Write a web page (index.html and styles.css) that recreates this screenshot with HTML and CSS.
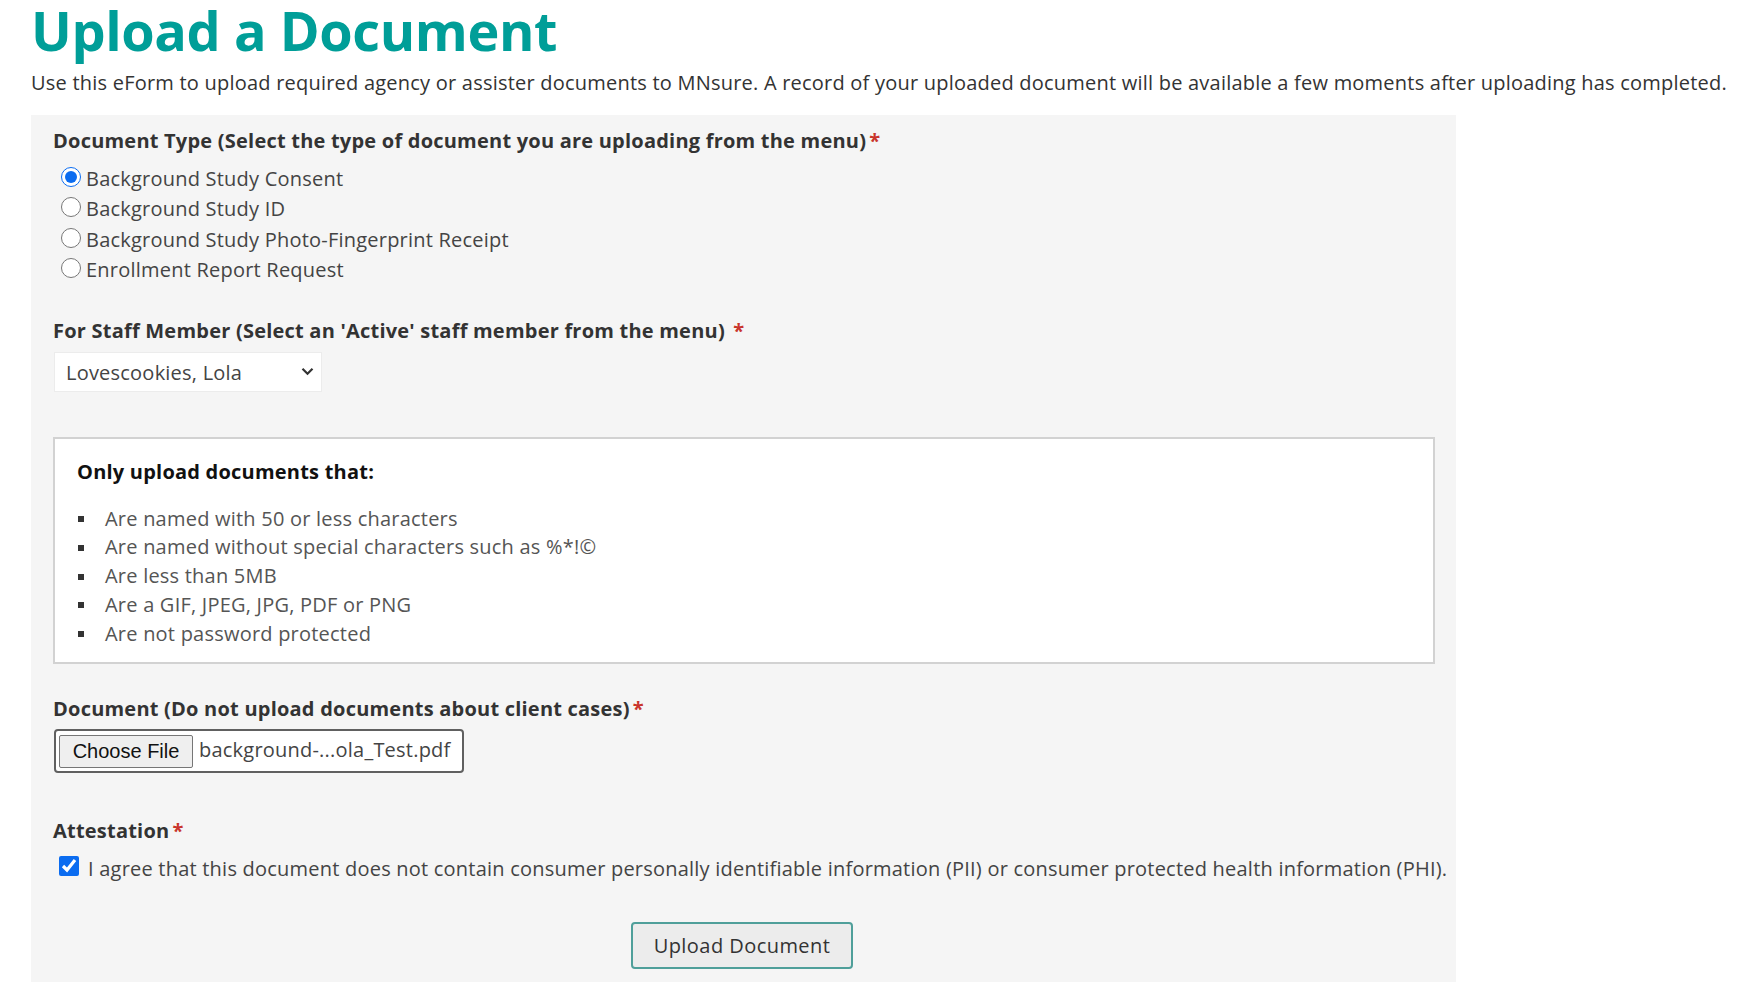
FILE: index.html
```html
<!DOCTYPE html>
<html lang="en">
<head>
<meta charset="utf-8">
<title>Upload a Document</title>
<link rel="stylesheet" href="styles.css">
</head>
<body>
<div class="page">
  <h1 class="title">Upload a Document</h1>
  <p class="intro">Use this eForm to upload required agency or assister documents to MNsure. A record of your uploaded document will be available a few moments after uploading has completed.</p>

  <form class="panel">
    <div class="label">Document Type (Select the type of document you are uploading from the menu)<span class="req">*</span></div>
    <div class="radios">
      <label class="radio-row"><input type="radio" name="doctype" class="radio" checked><span>Background Study Consent</span></label>
      <label class="radio-row"><input type="radio" name="doctype" class="radio"><span>Background Study ID</span></label>
      <label class="radio-row"><input type="radio" name="doctype" class="radio"><span>Background Study Photo-Fingerprint Receipt</span></label>
      <label class="radio-row"><input type="radio" name="doctype" class="radio"><span>Enrollment Report Request</span></label>
    </div>

    <div class="label label-staff">For Staff Member (Select an 'Active' staff member from the menu) <span class="req">*</span></div>
    <div class="select">
      <span class="select-text">Lovescookies, Lola</span>
      <svg class="chevron" width="13" height="9" viewBox="0 0 13 9"><path d="M1.5 1.8 L6.5 6.8 L11.5 1.8" fill="none" stroke="#333" stroke-width="2.2"/></svg>
    </div>

    <div class="info">
      <div class="info-title">Only upload documents that:</div>
      <ul class="info-list">
        <li>Are named with 50 or less characters</li>
        <li>Are named without special characters such as %*!©</li>
        <li>Are less than 5MB</li>
        <li>Are a GIF, JPEG, JPG, PDF or PNG</li>
        <li>Are not password protected</li>
      </ul>
    </div>

    <div class="label label-doc">Document (Do not upload documents about client cases)<span class="req">*</span></div>
    <div class="file">
      <span class="file-btn">Choose File</span>
      <span class="file-name">background-...ola_Test.pdf</span>
    </div>

    <div class="label label-att">Attestation<span class="req">*</span></div>
    <label class="check-row"><input type="checkbox" class="check" checked><span>I agree that this document does not contain consumer personally identifiable information (PII) or consumer protected health information (PHI).</span></label>

    <div class="submit-wrap">
      <button type="button" class="submit">Upload Document</button>
    </div>
  </form>
</div>
</body>
</html>
```

FILE: styles.css
```css
html, body {
  margin: 0;
  padding: 0;
  background: #ffffff;
}

body {
  font-family: "Open Sans", "DejaVu Sans", sans-serif;
  font-size: 20px;
  letter-spacing: 0.22px;
  color: #333333;
  overflow: hidden;
}

.page {
  padding: 1px 0 0 31px;
}

.title {
  margin: 0;
  font-size: 54px;
  line-height: 59.4px;
  font-weight: 700;
  letter-spacing: -0.4px;
  color: #009e98;
}

.intro {
  margin: 7.6px 0 0 0;
  line-height: 30px;
  white-space: nowrap;
  color: #333333;
}

.panel {
  margin-top: 17px;
  width: 1425px;
  box-sizing: border-box;
  background: #f5f5f5;
  padding: 11px 21px 40px 22px;
}

.label {
  font-weight: 700;
  line-height: 30px;
  color: #333333;
  white-space: nowrap;
}

.req {
  color: #c9352c;
  margin-left: 3px;
}

.radios {
  margin-top: 8px;
  display: flex;
  flex-direction: column;
}

.radio-row {
  display: flex;
  align-items: flex-start;
  line-height: 30.4px;
  color: #444444;
}

.radio {
  flex: none;
  width: 20px;
  height: 20px;
  margin: 3px 5px 0 8px;
  accent-color: #0b6cf0;
}

.label-staff {
  margin-top: 30px;
}

.select {
  margin: 6px 0 0 1px;
  width: 268px;
  height: 40px;
  box-sizing: border-box;
  background: #ffffff;
  border: 1px solid #ececec;
  display: flex;
  align-items: center;
  justify-content: space-between;
  padding: 2px 7px 0 11px;
  color: #444444;
  line-height: 30px;
}

.chevron {
  display: block;
  flex: none;
  margin-top: -2px;
}

.info {
  margin-top: 45px;
  background: #ffffff;
  border: 2px solid #d2d2d2;
  padding: 18px 22px 13px 22px;
}

.info-title {
  font-weight: 700;
  line-height: 30px;
  color: #111111;
}

.info-list {
  list-style: none;
  margin: 18px 0 0 0;
  padding: 0;
}

.info-list li {
  display: flex;
  align-items: center;
  line-height: 28.8px;
  color: #555555;
}

.info-list li::before {
  content: "";
  width: 6px;
  height: 6px;
  background: #333333;
  margin: 0 21px 0 1px;
  flex: none;
}

.label-doc {
  margin-top: 30px;
}

.file {
  margin: 5px 0 0 1px;
  width: 410px;
  height: 44px;
  box-sizing: border-box;
  border: 2px solid #606060;
  border-radius: 4px;
  background: #ffffff;
  display: flex;
  align-items: flex-start;
  padding: 4px 0 0 3px;
}

.file-btn {
  flex: none;
  width: 134px;
  height: 33px;
  box-sizing: border-box;
  border: 1px solid #767676;
  border-radius: 2px;
  background: #efefef;
  font-family: "Liberation Sans", Arial, sans-serif;
  font-size: 20px;
  letter-spacing: 0;
  line-height: 31px;
  text-align: center;
  color: #111111;
}

.file-name {
  margin-left: 6px;
  line-height: 30px;
  color: #444444;
  white-space: nowrap;
}

.label-att {
  margin-top: 43px;
}

.check-row {
  margin-top: 8px;
  display: flex;
  align-items: flex-start;
  line-height: 30px;
  color: #444444;
  white-space: nowrap;
}

.check {
  flex: none;
  width: 20px;
  height: 20px;
  margin: 2px 9px 0 6px;
  accent-color: #0b6cf0;
}

.submit-wrap {
  margin-top: 38px;
  display: flex;
  justify-content: center;
  padding-right: 4px;
}

.submit {
  width: 222px;
  height: 47px;
  box-sizing: border-box;
  border: 2px solid #4f9f9a;
  border-radius: 4px;
  background: #ececec;
  font-family: "Open Sans", "DejaVu Sans", sans-serif;
  font-size: 20px;
  letter-spacing: 0.45px;
  color: #333333;
  padding: 0;
}
```
